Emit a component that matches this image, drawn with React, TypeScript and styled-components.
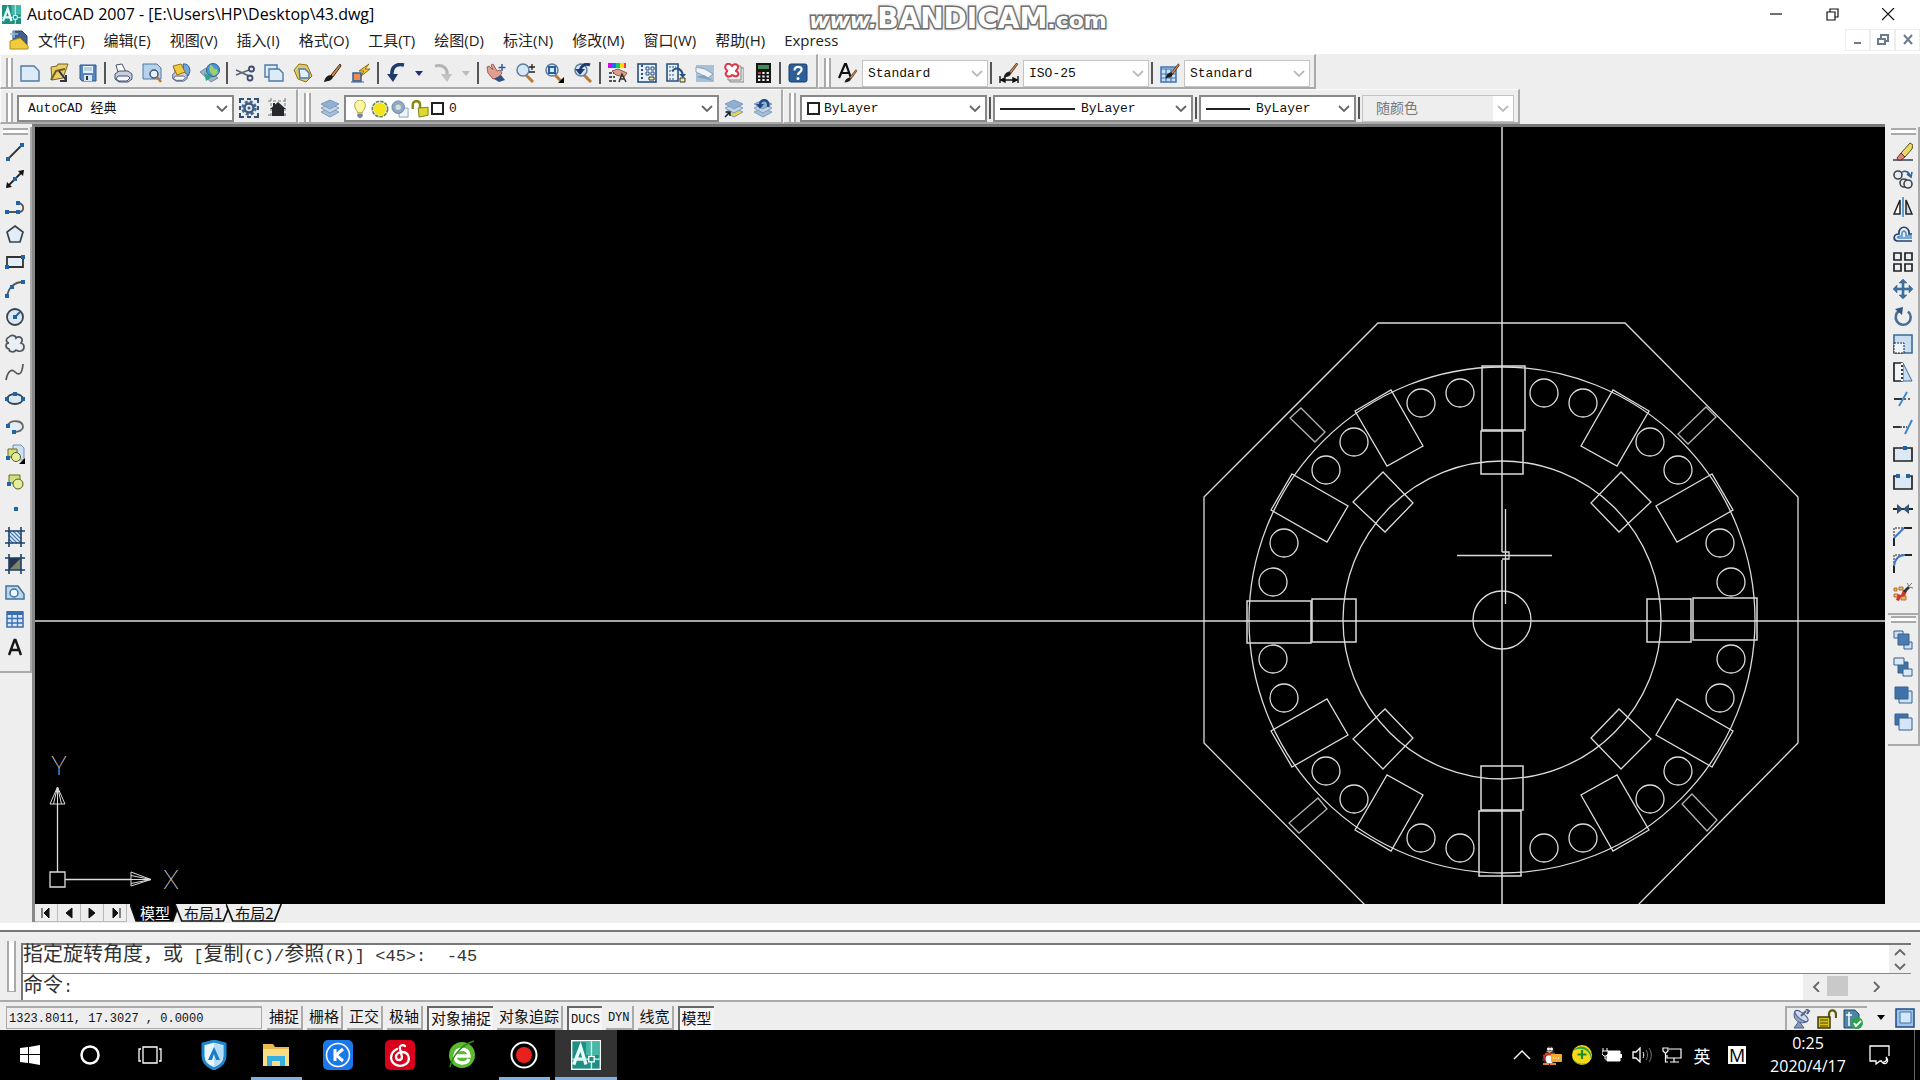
import React from "react";
import styled, { createGlobalStyle, css } from "styled-components";

const UI = `"Open Sans", "Noto Sans CJK SC", sans-serif`;
const MONO = `"Liberation Mono", "Noto Sans CJK SC", monospace`;

const GlobalStyle = createGlobalStyle`
  * { box-sizing: border-box; }
  body { margin: 0; background: #eee; font-family: ${UI}; color: #111; }
  button, select, input { font: inherit; color: inherit; margin: 0; padding: 0; border: 0; background: none; border-radius: 0; }
  button { cursor: default; }
  svg { display: block; }
`;

/* ---------- icons ---------- */

const B = "#2d5f9a";
const sheet = <path d="M1 3h13l5 5v10H1z" fill="#dcebf8" stroke="#4d79a5" strokeWidth="1.4" />;
const printer = (
  <g stroke="#44506e" strokeWidth="1">
    <path d="M5 9L3 2l6-1 4 8z" fill="#fff" />
    <path d="M2 11l4-3h9l4 3v5l-4 3H6l-4-3z" fill="#c8cede" />
    <path d="M5 13h10l2 2-3 3H6l-3-2z" fill="#f4f6fb" />
  </g>
);
const lens = (
  <g>
    <path d="M11 12l7 7" stroke="#b97a35" strokeWidth="3" />
    <circle cx="8" cy="7" r="6" fill="#d6e7f7" stroke="#5e7ea0" strokeWidth="1.5" />
  </g>
);
const brush = (
  <g>
    <path d="M9 12L18 1l1 2-8 11z" fill="#c98b55" stroke="#4a2a16" strokeWidth="1" />
    <path d="M2 19c1-4 3-7 7-7l2 2c-1 4-5 4-9 5z" fill="#1d1d1d" />
  </g>
);
const stack = (c: string) => (
  <g stroke="#7f9cbd" strokeWidth="1">
    <path d="M1 14l9-4 9 4-9 5z" fill={c} />
    <path d="M1 10l9-4 9 4-9 5z" fill="#c2d4e8" />
    <path d="M1 6l9-4 9 4-9 5z" fill="#8fb0d3" />
  </g>
);
const dot = (x: number, y: number) => <rect x={x - 2} y={y - 2} width="4" height="4" fill="#1f65a5" />;
const frame = <path d="M4 0v20M16 0v20M0 4h20M0 16h20" stroke="#1f3f66" strokeWidth="1.6" />;

const ICONS: Record<string, React.ReactNode> = {
  new: sheet,
  open: (
    <g stroke="#776024">
      <path d="M2 4l6-1 1-2h10l-5 14-11 2z" fill="#e9cf6a" />
      <path d="M2 17l5-9 9-2" fill="none" strokeWidth="2" />
      <path d="M10 8l7 9m0-5v6h-6" stroke="#334" strokeWidth="2" fill="none" />
    </g>
  ),
  save: (
    <g>
      <path d="M2 2h16v16H4l-2-2z" fill="#5487c2" stroke="#2f5a8e" />
      <rect x="5" y="3" width="10" height="7" fill="#e6f0fa" />
      <path d="M6 5h8M6 7h8" stroke="#8fb0d3" />
      <rect x="6" y="12" width="8" height="6" fill="#dfe6ee" />
      <rect x="8" y="13" width="2" height="4" fill="#234" />
    </g>
  ),
  print: printer,
  preview: (
    <g>
      <path d="M1 1h14l4 4v11H1z" fill="#b7d2ec" stroke="#4d79a5" />
      <circle cx="12" cy="11" r="4" fill="#e5f2fd" stroke="#456" strokeWidth="1.5" />
      <path d="M15 14l4 5" stroke="#b97a35" strokeWidth="2.5" />
    </g>
  ),
  publish: (
    <g>
      <path d="M12 1c6-1 9 6 5 12l-4-2z" fill="#6aa8df" stroke="#2d5f9a" />
      <g transform="translate(0 2) scale(.85)">{printer}</g>
      <path d="M2 3l8-2 4 8-8 3z" fill="#f1ca3e" stroke="#9a7413" />
    </g>
  ),
  web: (
    <g>
      <path d="M0 9l6-4 12 10-7 4z" fill="#9fb0c4" stroke="#7d8ea3" />
      <circle cx="13" cy="7" r="6.5" fill="#4b93d8" stroke="#2a5f92" />
      <path d="M10 2c4 0 3 5 7 4l1 4-4 3c-3-3-6-4-4-11z" fill="#9bd06a" />
      <path d="M4 10l8 4-6 4z" fill="#28a884" />
    </g>
  ),
  cut: (
    <g fill="none" stroke="#3d4c72" strokeWidth="1.8">
      <path d="M1 7l13 6M1 12l13-5" stroke="#5c6878" />
      <circle cx="16.5" cy="6" r="2.5" />
      <circle cx="15" cy="15" r="2.5" />
    </g>
  ),
  copy: (
    <g fill="#dcebf8" stroke="#4d79a5" strokeWidth="1.4">
      <path d="M1 2h12v12H1z" />
      <path d="M5 6h10l4 4v8H5z" />
    </g>
  ),
  paste: (
    <g>
      <path d="M1 7l5-6 8 1 5 11-6 6-8-3z" fill="#e2c862" stroke="#8a7324" />
      <path d="M6 6h6l4 4v5H7z" fill="#e3effa" stroke="#4d79a5" strokeWidth="1.4" />
    </g>
  ),
  brush,
  block: (
    <g>
      <path d="M18 1L8 8h5l-4 6 10-8h-5z" fill="#f3c531" stroke="#916c10" />
      <rect x="2" y="10" width="8" height="8" fill="#f08a4e" stroke={B} strokeWidth="1.5" />
      <path d="M0 19h13" stroke={B} />
    </g>
  ),
  undo: (
    <g>
      <path d="M18 2C9 0 5 5 6 13" fill="none" stroke="#1f3a6c" strokeWidth="3.5" />
      <path d="M1 11h11l-5 8z" fill="#1f3a6c" />
    </g>
  ),
  redo: (
    <g>
      <path d="M2 3c9-2 13 3 12 10" fill="none" stroke="#b5b5b5" strokeWidth="3" />
      <path d="M8 11h11l-5 8z" fill="#c2c2c2" />
    </g>
  ),
  pan: (
    <g>
      <path d="M1 4l2-1 4 4-2-5 2-1 4 7 3-1 2 3-4 5-5 1-5-6z" fill="#dfa091" stroke="#a15d52" />
      <path d="M8 16l7-4 4 5-6 2z" fill="#2f5380" />
      <path d="M16 1v7M12.500 4.500h7" stroke={B} strokeWidth="1.5" />
    </g>
  ),
  zoom: (
    <g>
      {lens}
      <path d="M17 1v6M14 4h6M14 9h6" stroke="#222" strokeWidth="1.3" />
    </g>
  ),
  zoomWindow: (
    <g>
      {lens}
      <rect x="5" y="4" width="6" height="6" fill="none" stroke={B} strokeWidth="2" />
      <path d="M20 14v6h-6z" />
    </g>
  ),
  zoomPrev: (
    <g>
      {lens}
      <path d="M17 2C12 0 8 3 7 7" fill="none" stroke="#1f3a6c" strokeWidth="3" />
      <path d="M2 6h10l-5 6z" fill="#1f3a6c" />
    </g>
  ),
  props: (
    <g>
      <path d="M0 0h4v5H0z" fill="#d0e" />
      <path d="M4 0h4v5H4z" fill="#26f" />
      <path d="M8 0h4v5H8z" fill="#1c6" />
      <path d="M12 0h4v5h-4z" fill="#fd0" />
      <path d="M16 0h2v5h-2z" fill="#f33" />
      <path d="M4 8l6-2 9 4-3 4-8-2z" fill="#dba08f" stroke="#93594d" />
      <path d="M1 10h5M1 14h6M1 18h8" stroke="#555" strokeDasharray="3 1" strokeWidth="2" />
      <path d="M11 19l3-8 4 8m-6-3h5" fill="none" stroke="#333" strokeWidth="1.5" />
    </g>
  ),
  design: (
    <g>
      <rect x="1" y="1" width="18" height="18" fill="#e8f1fa" stroke="#274f80" strokeWidth="1.6" />
      <path d="M5 2v16" stroke="#274f80" strokeDasharray="2 2" strokeWidth="2" />
      <path d="M9 4h3v3H9zM14 4h3v3h-3zM9 9h3v3H9zM14 9h3v3h-3z" fill="none" stroke="#274f80" />
      <path d="M12 14h5v3h-5z" fill="#f4e9a0" stroke="#333" />
    </g>
  ),
  palettes: (
    <g>
      <path d="M1 1h11v17H1z" fill="#e8f1fa" stroke="#274f80" strokeWidth="1.6" />
      <path d="M3 4h7M3 8h5M3 12h5M3 16h5" stroke="#274f80" strokeDasharray="2 1" />
      <path d="M6 8c5-5 10-2 11 5" fill="none" stroke="#274f80" strokeWidth="2" />
      <path d="M13 11h7l-3 4z" fill="#274f80" />
      <path d="M14 15h5v4h-5z" fill="#f4e9a0" stroke="#333" />
    </g>
  ),
  sheetset: (
    <g>
      <path d="M1 2h18v17H1z" fill="#a9c1d6" />
      <path d="M1 4l9 2 8 5-5 4-12-6z" fill="#eef3f7" stroke="#8ba2b5" />
      <path d="M1 14l8-2 10 6" fill="#7fa3bf" />
    </g>
  ),
  markup: (
    <g>
      <path d="M6 5h14v14H6z" fill="#ddd" stroke="#888" />
      <path d="M4 3h13v14H4z" fill="#eee" stroke="#888" />
      <path d="M3 1c3-1 4 1 5 2 2-3 6-2 6 1s-2 3-2 4c3 1 3 4 1 5s-4-1-5-1c-1 2-5 2-6 0s1-4 2-4C1 7 0 3 3 1z" fill="#fff" stroke="#dc3548" strokeWidth="2" />
    </g>
  ),
  calc: (
    <g>
      <rect x="3" y="0" width="15" height="20" fill="#161616" />
      <path d="M5 2h11v4H5z" fill="#408a55" />
      <path d="M5 10h11M5 13.500h11M5 17h11" stroke="#f2f2f2" strokeWidth="2" strokeDasharray="2.3 2" />
      <path d="M5 10h2.300" stroke="#d33" strokeWidth="2" />
    </g>
  ),
  help: (
    <g>
      <rect x="1" y="1" width="18" height="18" rx="2" fill="#2c5f99" stroke="#173d6b" />
      <path d="M6.500 7.500c0-5 8-4.500 7-.5-.5 2-3.500 2.500-3.500 5" fill="none" stroke="#fff" strokeWidth="2.2" />
      <circle cx="10" cy="15.5" r="1.5" fill="#fff" />
    </g>
  ),
  textStyle: (
    <g>
      <path d="M1 15L7 1h1l5 14M4 10h7" fill="none" stroke="#111" strokeWidth="2.2" />
      <g transform="translate(5 6) scale(.72)">{brush}</g>
    </g>
  ),
  dimStyle: (
    <g>
      <g transform="translate(3 -1) scale(.82)">{brush}</g>
      <path d="M1 13v7M19 13v7M1 17h18M2 17l4-2v4zM18 17l-4-2v4z" stroke="#111" strokeWidth="1.4" />
    </g>
  ),
  tableStyle: (
    <g>
      <path d="M1 4h15v15H1z" fill="#c9dff5" stroke="#3e73b0" strokeWidth="1.5" />
      <path d="M1 6h15M1 11h15M1 15h15M6 6v13M11 6v13" stroke="#3e73b0" strokeWidth="1.2" />
      <g transform="translate(4 0) scale(.8)">{brush}</g>
    </g>
  ),
  gear: (
    <g>
      <path d="M1 5V1h4M8 1h4M15 1h4v4M19 8v4M19 15v4h-4M12 19H8M5 19H1v-4M1 12V8" fill="none" stroke="#2f5279" strokeWidth="2" />
      <circle cx="10" cy="10" r="6.5" fill="none" stroke="#4b6c92" strokeWidth="2.5" strokeDasharray="3 2.1" />
      <circle cx="10" cy="10" r="4.5" fill="#dfe9f3" stroke="#3c5a7d" strokeWidth="2.4" />
      <circle cx="10" cy="10" r="1.5" fill="#3c5a7d" />
    </g>
  ),
  home: (
    <g>
      <path d="M3 0v20M17 0v20M0 3h20M0 17h20" stroke="#777" strokeDasharray="3 2" />
      <path d="M10 4l8 7h-2v7H4v-7H2z" fill="#24282d" />
      <path d="M5 5h2v4H5z" fill="#24282d" />
    </g>
  ),
  layers: stack("#a8bdd6"),
  layerCurrent: (
    <g>
      {stack("#e3d44b")}
      <path d="M1 19l5-5M2 14h4v4" stroke="#123" strokeWidth="1.5" fill="none" />
    </g>
  ),
  layerPrev: (
    <g>
      {stack("#a8bdd6")}
      <path d="M15 9c2-8-7-9-8-3" fill="none" stroke="#1f4b86" strokeWidth="2.5" />
      <path d="M3 6h8l-4 5z" fill="#1f4b86" />
    </g>
  ),
  bulb: (
    <g>
      <path d="M7 14c0-3-3-4-3-8a6 6 0 0 1 12 0c0 4-3 5-3 8z" fill="#fdf6a0" stroke="#b29c34" />
      <path d="M7 15h6v3l-2 2H9l-2-2z" fill="#77839b" />
    </g>
  ),
  sun: (
    <g>
      <circle cx="10" cy="10" r="8.5" fill="none" stroke="#6a8a55" strokeWidth="2" strokeDasharray="4 1" />
      <circle cx="10" cy="10" r="7" fill="#f6e418" />
    </g>
  ),
  freeze: (
    <g>
      <path d="M9 9h10v10H9z" fill="#eef4fb" stroke="#7f9cbd" />
      <circle cx="8" cy="8" r="7" fill="#8fa9bf" stroke="#6a89a5" />
      <circle cx="8" cy="8" r="3" fill="#d5dfe7" />
    </g>
  ),
  unlock: (
    <g>
      <path d="M2 10V5c0-5 8-5 8 0v5" fill="none" stroke="#8c8918" strokeWidth="2.8" />
      <path d="M8 9l11-1v9l-10 2z" fill="#dcd92e" stroke="#77750f" />
    </g>
  ),
  line: (
    <g>
      <path d="M3 17L17 3" stroke="#333" strokeWidth="1.8" />
      {dot(3, 17)}
      {dot(17, 3)}
    </g>
  ),
  xline: (
    <g>
      <path d="M2 18L18 2" stroke="#222" strokeWidth="1.8" />
      <path d="M13 2l6-1-1 6zM1 19l6-1-5-5z" fill="#111" />
      {dot(10, 10)}
    </g>
  ),
  pline: (
    <g>
      <path d="M2 15h11c7 1 7-9 0-9" fill="none" stroke="#555" strokeWidth="1.8" />
      {dot(2, 15)}
      {dot(13, 15)}
      {dot(13, 6)}
    </g>
  ),
  polygon: <path d="M10 2l8 6-3 10H5L2 8z" fill="#e2edf7" stroke="#39424c" strokeWidth="1.7" />,
  rect: (
    <g>
      <path d="M2 5h16v10H2z" fill="#e2edf7" stroke="#333" strokeWidth="1.8" />
      {dot(2, 15)}
      {dot(18, 5)}
    </g>
  ),
  arc: (
    <g>
      <path d="M2 18C3 9 9 3 18 3" fill="none" stroke="#555" strokeWidth="1.8" />
      {dot(2, 17)}
      {dot(7, 8)}
      {dot(18, 3)}
    </g>
  ),
  circle: (
    <g>
      <circle cx="10" cy="10" r="8" fill="#dbe9f6" stroke="#39424c" strokeWidth="1.8" />
      <path d="M10 10l5-5" stroke={B} strokeWidth="2" />
      {dot(10, 10)}
    </g>
  ),
  cloud: <path d="M4 3c3-3 7-1 7 1 4-3 8 1 5 5 4 1 4 7 0 8-3 1-4-1-5-1-2 3-7 2-7-1-4-1-4-6 0-6C0 8 1 4 4 3z" fill="#e8f0f8" stroke="#555" strokeWidth="1.7" />,
  spline: <path d="M1 18C3 8 7 7 10 10s7 4 8-8" fill="none" stroke="#555" strokeWidth="1.7" />,
  ellipse: (
    <g>
      <ellipse cx="10" cy="10" rx="8" ry="5" fill="#dbe9f6" stroke="#39424c" strokeWidth="1.8" />
      {dot(2, 10)}
      {dot(18, 10)}
      {dot(10, 5)}
    </g>
  ),
  ellipseArc: (
    <g>
      <path d="M2 9c4-7 16-6 16 1 0 3-4 5-9 5" fill="#e2edf7" stroke="#666" strokeWidth="1.8" />
      {dot(3, 9)}
      {dot(9, 15)}
    </g>
  ),
  insert: (
    <g>
      <path d="M8 1h8l3 3v12H8z" fill="#cfe0f2" stroke="#6c8fb5" />
      <path d="M3 5h9v8H3z" fill="#d4df79" stroke="#666d20" />
      <circle cx="11" cy="13" r="4.5" fill="#e5eda0" stroke="#555c1c" />
      {dot(3, 14)}
      <path d="M20 14v6h-6z" />
    </g>
  ),
  makeBlock: (
    <g>
      <path d="M4 3h11v8H4z" fill="#d4df79" stroke="#666d20" />
      <circle cx="13" cy="12" r="5" fill="#e5eda0" stroke="#555c1c" />
      {dot(4, 12)}
    </g>
  ),
  point: dot(11, 10),
  hatch: (
    <g>
      <path d="M4 4h12v12H4z" fill="#e7eff7" />
      <path d="M4 12l4 4M4 8l8 8M4 4l12 12M8 4l8 8M12 4l4 4" stroke="#3f77b0" strokeWidth="1.2" />
      {frame}
    </g>
  ),
  gradient: (
    <g>
      <path d="M4 4h12v12H4z" fill="#7b8668" />
      <path d="M4 4h12L4 16z" fill="#2a3050" />
      {frame}
    </g>
  ),
  region: (
    <g>
      <path d="M1 4h12l6 8v5H1z" fill="#bcd6ee" stroke="#40739f" strokeWidth="1.5" />
      <circle cx="9" cy="11" r="4" fill="#eef5fb" stroke="#40739f" strokeWidth="1.5" />
    </g>
  ),
  table: (
    <g>
      <path d="M2 3h16v15H2z" fill="#d9e9f9" stroke="#3b6db0" strokeWidth="1.5" />
      <path d="M2 4h16" stroke="#3b6db0" strokeWidth="4" />
      <path d="M2 9.500h16M2 14h16M7 5v13M12.500 5v13" stroke="#3b6db0" strokeWidth="1.3" />
    </g>
  ),
  text: <path d="M4 18L9.500 3h1L16 18M6 13h8" fill="none" stroke="#161616" strokeWidth="2.4" />,
  erase: (
    <g>
      <path d="M0 18h20" stroke="#234" strokeWidth="1.4" />
      <path d="M8 11L17 1l3 2-1 4-7 8z" fill="#ead868" stroke="#56511f" />
      <path d="M4 16l4-5 4 4-4 3H5z" fill="#d9857a" stroke="#6d3029" />
    </g>
  ),
  copyObj: (
    <g fill="#e4edf6" stroke="#444" strokeWidth="1.6">
      <circle cx="5" cy="6" r="4" />
      <circle cx="11" cy="14" r="4" />
      <circle cx="15" cy="15" r="4" />
      <path d="M9 3c4-2 7 0 8 4M14 5l4 3 1-5" fill="none" stroke={B} />
    </g>
  ),
  mirror: (
    <g>
      <path d="M7 3v14H1z" fill="#fff" stroke="#222" strokeWidth="1.5" />
      <path d="M13 3v14h6z" fill="#cfe0f2" stroke="#222" strokeWidth="1.5" />
      <path d="M10 0v20" stroke="#3c86cf" strokeWidth="1.6" />
    </g>
  ),
  offset: (
    <g fill="none" strokeWidth="1.7">
      <path d="M19 17H4c-4-1-4-7 2-7-1-9 11-9 10 0h3" stroke="#24436b" />
      <path d="M19 14H5c-1-1 0-2 4-2-1-7 5-6 4 0h6" stroke="#4e93d9" />
    </g>
  ),
  array: (
    <g fill="#e9eff6" stroke="#222" strokeWidth="1.7">
      <path d="M1 1h7v7H1zM12 1h7v7h-7zM1 12h7v7H1zM12 12h7v7h-7z" />
    </g>
  ),
  move: <path d="M10 0l4 4h-3v5h5V6l4 4-4 4v-3h-5v5h3l-4 4-4-4h3v-5H4v3l-4-4 4-4v3h5V4H6z" fill="#3d6f9f" stroke="#3d6f9f" strokeWidth=".6" />,
  rotate: (
    <g>
      <path d="M7 3.500a7.500 7.500 0 1 0 8 1" fill="none" stroke="#4a6d94" strokeWidth="2.6" />
      <path d="M2 2l8-2-1 8z" fill="#33587f" />
    </g>
  ),
  scale: (
    <g>
      <path d="M1 1h18v18H1z" fill="#c9def2" stroke="#3e6a98" strokeWidth="1.6" />
      <path d="M1 9h10v10H1z" fill="#eef5fb" stroke="#222" strokeDasharray="2 1" />
    </g>
  ),
  stretch: (
    <g>
      <path d="M10 1l9 18h-9z" fill="#c9def2" stroke="#3e6a98" />
      <path d="M1 1h8v18H1z" fill="#f1f5f9" stroke="#222" strokeWidth="1.7" />
      <path d="M9 1v18" stroke="#fff" strokeDasharray="2 2" strokeWidth="2" />
    </g>
  ),
  trim: (
    <g>
      <path d="M1 10h8" stroke="#333" strokeWidth="2" />
      <path d="M11 10h8" stroke="#333" strokeDasharray="2 2" strokeWidth="1.5" />
      <path d="M6 17l8-14" stroke="#3c86cf" strokeWidth="1.8" />
    </g>
  ),
  extend: (
    <g>
      <path d="M0 10h7" stroke="#333" strokeWidth="2" />
      <path d="M7 10h7" stroke="#333" strokeDasharray="2 1" strokeWidth="1.5" />
      <path d="M12 17l7-14" stroke="#3c86cf" strokeWidth="2" />
    </g>
  ),
  breakAt: (
    <g>
      <path d="M1 4h18v13H1z" fill="#dbe8f5" stroke="#222" strokeWidth="1.7" />
      {dot(12, 4)}
    </g>
  ),
  break: (
    <g>
      <path d="M5 4H1v13h18V4h-4" fill="#dbe8f5" stroke="#222" strokeWidth="1.7" />
      {dot(5, 4)}
      {dot(15, 4)}
    </g>
  ),
  join: (
    <g>
      <path d="M0 10h20" stroke="#222" strokeWidth="2" />
      <path d="M4 5l6 5-6 5zM16 5l-6 5 6 5z" fill="#34567c" />
    </g>
  ),
  chamfer: (
    <g fill="none">
      <path d="M1 19v-8M11 1h8" stroke="#222" strokeWidth="2" />
      <path d="M1 9V1h9" stroke="#222" strokeDasharray="2 1" />
      <path d="M1 11L11 1" stroke="#3c78c8" strokeWidth="2" />
    </g>
  ),
  fillet: (
    <g fill="none">
      <path d="M1 19v-8M11 1h8" stroke="#222" strokeWidth="2" />
      <path d="M1 9V1h9" stroke="#222" strokeDasharray="2 1" />
      <path d="M1 12C2 5 5 1 12 1" stroke="#3c78c8" strokeWidth="2" />
    </g>
  ),
  explode: (
    <g>
      <path d="M1 6h3v3H1zM6 5h4v3H6zM1 12h4v3H1zM8 14h5v4H8z" fill="#f5b35c" stroke="#9b5a1c" strokeWidth=".8" />
      <path d="M3 18l2-6 3 1 2-5 4 1-2 5-4 1-2 4z" fill="#d3372c" />
      <path d="M10 9l5-5 2 2-5 5z" fill="#333" />
      <path d="M14 1l2 3M19 1l-3 3M20 6l-4-1" stroke="#777" />
    </g>
  ),
  front: (
    <g stroke="#37618d">
      <path d="M1 1h9v7H1zM11 12h8v7h-8z" fill="#cfe2f4" />
      <path d="M5 4h11v11H5z" fill="#4a7db2" />
    </g>
  ),
  back: (
    <g stroke="#37618d">
      <path d="M5 5h10v11H5z" fill="#3f72a8" />
      <path d="M1 1h10v7H1zM10 12h9v7h-9z" fill="#dbe9f7" />
    </g>
  ),
  above: (
    <g stroke="#37618d">
      <path d="M6 6h13v12H6z" fill="#cfe2f4" />
      <path d="M2 2h13v12H2z" fill="#3f72a8" />
    </g>
  ),
  under: (
    <g stroke="#37618d">
      <path d="M2 2h13v11H2z" fill="#3f72a8" />
      <path d="M6 6h13v12H6z" fill="#d3e5f6" />
    </g>
  ),
  dish: (
    <g stroke="#4d5f8c">
      <path d="M3 19l5-7 5 7z" fill="#8996b8" />
      <path d="M4 2c-4 9 6 15 13 10z" fill="#93a4c8" />
      <ellipse cx="10.5" cy="7" rx="8" ry="3" transform="rotate(38 10.5 7)" fill="#d2dcee" />
      <path d="M10 7l5-5M15 0l3 2-2 3" strokeWidth="2" fill="none" />
    </g>
  ),
  tray: (
    <g>
      <path d="M12 9V5c0-5 7-5 7 1v3" fill="none" stroke="#5d5a10" strokeWidth="2.2" />
      <path d="M1 8h12v11H1z" fill="#d6bf1b" stroke="#3f3b08" strokeWidth="1.5" />
      <path d="M3 11h8M3 14h8M3 17h8" stroke="#4a450a" />
    </g>
  ),
  xref: (
    <g>
      <path d="M1 1h11l4 4v14H1z" fill="#4f86a6" stroke="#204a60" />
      <path d="M6 3v14M3 6h6" stroke="#fff" strokeWidth="1.5" />
      <circle cx="14" cy="14" r="6" fill="#2ba24a" />
      <path d="M11 14l2 3 5-5" fill="none" stroke="#fff" strokeWidth="2" />
    </g>
  ),
  clean: (
    <g>
      <path d="M1 1h18v18H1z" fill="#9fc3e6" stroke="#1f4b86" strokeWidth="1.5" />
      <path d="M5 4h11v11H5z" fill="#d5e7f8" stroke="#3e73b0" />
    </g>
  ),
  autocad: (
    <g>
      <path d="M0 0h20v20H0z" fill="#1f8f83" />
      <path d="M10 0h10v10H10z" fill="#45b8a8" />
      <path d="M1 17L6 4l4 13M3 13h6" fill="none" stroke="#e9fffb" strokeWidth="2.4" />
      <path d="M14 0v20M0 13h20" stroke="#d9f5f0" strokeWidth="1" />
      <path d="M12 11h4v4h-4z" fill="#1f8f83" stroke="#fff" />
    </g>
  ),
  dwg: (
    <g>
      <path d="M4 1h9l5 5v11H4z" fill="#41618c" stroke="#28456c" />
      <path d="M1 11l10-3 8 8v3H1z" fill="#f0cb3c" stroke="#b08d1a" />
      <path d="M5 0v8M1 4h8" stroke="#8fb8e0" strokeWidth="1.5" />
    </g>
  ),
};

const Icon = ({ name, size = 20 }: { name: string; size?: number }) => (
  <svg width={size} height={size} viewBox="0 0 20 20" aria-hidden="true">
    {ICONS[name]}
  </svg>
);

/* ---------- window frame ---------- */

const Page = styled.div`
  display: flex;
  flex-direction: column;
  height: 100vh;
  overflow: hidden;
`;

const TitleBar = styled.header`
  position: relative;
  display: flex;
  align-items: center;
  height: 28px;
  padding: 0 4px 0 2px;
  background: #fff;
`;

const Title = styled.h1`
  flex: 1;
  margin: 0 0 0 6px;
  font-size: 16px;
  line-height: 28px;
  font-weight: 400;
  color: #000;
`;

const WindowButton = styled.button`
  display: grid;
  place-items: center;
  width: 56px;
  height: 28px;
`;

const Watermark = styled.div`
  position: absolute;
  top: 3px;
  left: 0;
  right: 0;
  padding-right: 4px;
  text-align: center;
  font: 700 28px/32px "DejaVu Sans", sans-serif;
  color: #fff;
  -webkit-text-stroke: 3px #666;
  paint-order: stroke fill;
  text-shadow: 0 0 4px #888;
  pointer-events: none;
  z-index: 2;
`;

const WatermarkSmall = styled.span`
  font-size: 22px;
  font-style: ${(p: { $slant?: boolean }) => (p.$slant ? "italic" : "normal")};
`;

const MenuBar = styled.nav`
  display: flex;
  align-items: center;
  height: 26px;
  padding: 0 0 2px 9px;
  background: #fff;
`;

const Menus = styled.div`
  display: flex;
  flex: 1;
  gap: 19px;
  margin-left: 9px;
`;

const MenuItem = styled.button`
  font-size: 15px;
  line-height: 24px;
  white-space: nowrap;
  color: #222;
`;

const ChildButton = styled.button`
  display: grid;
  place-items: center;
  width: 25px;
  height: 22px;
  border: 1px solid #eee;
`;

/* ---------- toolbars ---------- */

const Grip = styled.div<{ $flat?: boolean }>`
  flex: none;
  border: 0 solid #aaa;
  ${(p) =>
    p.$flat
      ? css`
          width: 25px;
          height: 7px;
          margin: 1px 2px 3px;
          border-width: 2px 0;
          background: #fff;
        `
      : css`
          width: 7px;
          height: 29px;
          margin-right: 4px;
          border-width: 0 2px;
          background: #fff;
        `}
`;

const ToolRow = styled.div<{ $tight?: boolean }>`
  display: flex;
  height: 35px;

  ${Grip} {
    margin-right: ${(p) => (p.$tight ? 2 : 4)}px;
  }
`;

const ToolPanel = styled.div`
  display: flex;
  align-items: flex-end;
  padding: 0 4px 0 5px;
  border-top: 1px solid #fafafa;
  border-left: 1px solid #fafafa;
  border-right: 2px solid #aaa;
  border-bottom: 2px solid #aaa;
`;

const ToolButton = styled.button`
  display: grid;
  place-items: center;
  flex: none;
  width: 29px;
  height: 28px;
`;

const DropButton = styled(ToolButton)`
  width: 18px;
`;

const Separator = styled.span`
  flex: none;
  width: 2px;
  height: 22px;
  margin: 0 2px 3px;
  background: #555;
`;

const Combo = styled.div<{ $width: number; $soft?: boolean; $off?: boolean }>`
  display: flex;
  align-items: center;
  gap: 2px;
  width: ${(p) => p.$width}px;
  height: 27px;
  padding: 0 4px 0 5px;
  background: ${(p) => (p.$off ? "linear-gradient(to left, #fff 20px, #eee 20px)" : "#fff")};
  border: ${(p) => (p.$soft ? "1px solid #c4c4c4" : "2px solid #888")};
  color: ${(p) => (p.$off ? "#777" : "#111")};
`;

const Select = styled.select<{ $indent?: number; $han?: boolean }>`
  flex: 1;
  min-width: 0;
  height: 22px;
  padding-left: ${(p) => p.$indent ?? 0}px;
  appearance: none;
  opacity: 1;
  font-family: ${MONO};
  font-size: ${(p) => (p.$han ? 14 : 13)}px;
`;

const Swatch = styled.span`
  width: 13px;
  height: 13px;
  border: 2px solid #222;
`;

const Rule = styled.span<{ $width: number }>`
  width: ${(p) => p.$width}px;
  height: 2px;
  margin-right: 4px;
  background: #222;
`;

const Chevron = ({ color = "#666", d = "M1 3l5 5 5-5" }: { color?: string; d?: string }) => (
  <svg width="12" height="11" viewBox="0 0 12 11" aria-hidden="true">
    <path d={d} fill="none" stroke={color} strokeWidth="1.8" />
  </svg>
);

const Caret = ({ color }: { color: string }) => (
  <svg width="8" height="5" viewBox="0 0 8 5" aria-hidden="true">
    <path d="M0 0h8L4 5z" fill={color} />
  </svg>
);

type ComboProps = {
  label: string;
  value: string;
  width: number;
  soft?: boolean;
  off?: boolean;
  indent?: number;
  han?: boolean;
  children?: React.ReactNode;
};

const ComboBox = ({ label, value, width, soft, off, indent, han, children }: ComboProps) => (
  <Combo $width={width} $soft={soft} $off={off}>
    {children}
    <Select aria-label={label} $indent={indent} $han={han} disabled={off}>
      <option>{value}</option>
    </Select>
    <Chevron color={soft ? "#bbb" : "#666"} />
  </Combo>
);

const Tools = ({ names }: { names: string[] }) => (
  <>
    {names.map((n) => (
      <ToolButton key={n} aria-label={n}>
        <Icon name={n} />
      </ToolButton>
    ))}
  </>
);

/* ---------- work area ---------- */

const Work = styled.main`
  display: flex;
  flex: 1;
  min-height: 0;
`;

const Side = styled.aside<{ $right?: boolean }>`
  flex: none;
  width: ${(p) => (p.$right ? 35 : 32)}px;
  padding: ${(p) => (p.$right ? "3px 0 0 3px" : "3px 0 0")};
`;

const SidePanel = styled.div<{ $tail?: number }>`
  display: flex;
  flex-direction: column;
  align-items: center;
  padding-bottom: ${(p) => p.$tail ?? 8}px;
  border-right: 2px solid #aaa;
  border-bottom: 2px solid #aaa;
`;

const SideTools = styled.div`
  display: flex;
  flex-direction: column;

  ${ToolButton} {
    height: 27px;
  }
  ${ToolButton}:nth-child(even) {
    height: 28px;
  }
`;

const Viewport = styled.section`
  display: flex;
  flex-direction: column;
  flex: 1;
  min-width: 0;
  border-left: 3px solid #888;
  border-top: 3px solid #777;
`;

const Canvas = styled.div`
  flex: 1;
  min-height: 0;
  background: #000;

  svg {
    width: 100%;
    height: 100%;
  }
`;

const AxisLabel = styled.text`
  font: 100 26px Roboto, sans-serif;
  fill: #eee;
  text-anchor: middle;
`;

const TabBar = styled.div`
  display: flex;
  height: 18px;
`;

const TabNav = styled.button`
  display: grid;
  place-items: center;
  width: 23px;
  border-right: 1px solid #bbb;
  border-bottom: 1px solid #bbb;
`;

const Tabs = styled.div`
  display: flex;
  margin-left: 3px;
`;

const Tab = styled.button<{ $on?: boolean }>`
  display: grid;
  height: 18px;
  margin-right: -5px;
  color: ${(p) => (p.$on ? "#fff" : "#111")};
  font: 15px/17px "Noto Sans CJK SC", sans-serif;

  > * {
    grid-area: 1 / 1;
  }
  svg {
    width: 100%;
    height: 18px;
  }
  span {
    padding: 0 9px;
    z-index: 1;
  }
`;

/* ---------- command line ---------- */

const Command = styled.section`
  display: flex;
  flex: none;
  height: 79px;
  margin-top: 1px;
  padding: 10px 9px 0 7px;
  border-bottom: 2px solid #aaa;
  background: linear-gradient(#fff 7px, #777 7px, #777 9px, #eee 9px);
`;

const CommandGrip = styled.div`
  width: 9px;
  height: 51px;
  margin: 8px 5px 0 0;
  border: solid #aaa;
  border-width: 0 2px 1px;
  background: #fff;
`;

const CommandBox = styled.div`
  flex: 1;
  margin-top: 10px;
  border-left: 2px solid #777;
  border-top: 2px solid #777;
  font: 17px/26px ${MONO};
  color: #333;
`;

const CommandRow = styled.div<{ $entry?: boolean }>`
  display: flex;
  height: ${(p) => (p.$entry ? 26 : 29)}px;
  background: #fff;
  white-space: pre;
  ${(p) => !p.$entry && "border-bottom: 1px solid #888; line-height: 21px;"}
`;

const Message = styled.div`
  flex: 1;
`;

const Han = styled.span`
  font-size: 20px;
`;

const Prompt = styled.label`
  padding-right: 6px;
`;

const Entry = styled.input`
  flex: 1;
  min-width: 0;
  outline: none;
`;

const VScroll = styled.div`
  display: flex;
  flex-direction: column;
  justify-content: space-around;
  align-items: center;
  width: 22px;
  background: #eee;

  button {
    display: block;
  }
`;

const HScroll = styled.div`
  display: flex;
  align-items: center;
  gap: 4px;
  width: 108px;
  padding: 0 29px 2px 8px;
  background: #eee;
`;

const Thumb = styled.span`
  width: 21px;
  height: 20px;
  margin-right: auto;
  background: #c9c9c9;
`;

/* ---------- status bar ---------- */

const Status = styled.footer`
  display: flex;
  flex: none;
  align-items: center;
  height: 28px;
  padding: 3px 5px 0 6px;
`;

const Coordinates = styled.output`
  width: 256px;
  height: 23px;
  margin-right: 5px;
  border: 1px solid #aaa;
  border-top-width: 2px;
  font: 12px/22px ${MONO};
  padding-left: 2px;
  white-space: pre;
`;

const Toggle = styled.button<{ $down?: boolean; $latin?: boolean }>`
  height: 24px;
  margin-right: 4px;
  padding: 3px 2px 0;
  border: solid #aaa;
  border-width: 0 2px 2px 0;
  font: ${(p) => (p.$latin ? "12px/19px" : "15px/19px")} ${MONO};
  ${(p) =>
    p.$down &&
    css`
      border-color: #666;
      border-width: 2px 0 0 2px;
      background: #f6f6f6;
    `}
`;

const StatusTray = styled.div`
  display: flex;
  align-items: center;
  gap: 6px;
  height: 24px;
  margin-left: auto;
  padding: 0 4px;
  border-left: 2px solid #aaa;
  border-top: 2px solid #aaa;
`;

const StatusButton = styled.button`
  margin-left: 10px;
`;

/* ---------- taskbar ---------- */

const Taskbar = styled.nav`
  display: flex;
  flex: none;
  height: 50px;
  background: #000;
  color: #fff;
`;

const TaskButton = styled.button<{ $wide?: boolean; $open?: boolean; $active?: boolean }>`
  display: grid;
  place-items: center;
  width: ${(p) => (p.$wide ? 60 : 62)}px;
  height: 50px;
  border-top: 3px solid transparent;
  border-bottom: 3px solid transparent;
  background: ${(p) => (p.$active ? "#333" : "transparent")};
  ${(p) => p.$open && "background: linear-gradient(#7fb2e0, #7fb2e0) center bottom / 51px 3px no-repeat border-box;"}
  ${(p) => p.$active && "border-bottom-color: #7fb2e0;"}
`;

const PinnedApps = styled.div`
  display: flex;
  flex: 1;
  margin-left: 3px;
`;

const TrayButton = styled.button<{ $width?: number }>`
  display: grid;
  place-items: center;
  width: ${(p) => p.$width ?? 30}px;
  font-size: 17px;
`;

const ImeMode = styled.span`
  width: 18px;
  height: 18px;
  background: #fff;
  color: #000;
  font: 18px/18px ${UI};
`;

const Clock = styled.time`
  display: flex;
  flex-direction: column;
  justify-content: center;
  width: 102px;
  text-align: center;
  font-size: 16px;
  line-height: 23px;
`;

const ShowDesktop = styled.button`
  width: 6px;
  margin-left: 15px;
  border-left: 1px solid #666;
`;

/* ---------- drawing data ---------- */

type Point = [number, number];
const CX = 1502;
const CY = 621;
const HOLES: Point[] = [[42, 228], [81, 218], [148, 179], [176, 151], [218, 78], [229, 39]];
const PLATES: Point[][] = [
  [[147, 210], [111, 231], [79, 175], [115, 155]],
  [[210, 147], [154, 115], [175, 79], [231, 111]],
  [[119, 149], [89, 118], [117, 89], [149, 119]],
];
const QUADRANTS: Point[] = [[-1, -1], [1, -1], [-1, 1], [1, 1]];
const BLOCKS = [
  [1482, 366, 43, 64], [1481, 431, 42, 43],
  [1247, 601, 64, 42], [1312, 599, 44, 43],
  [1647, 599, 44, 43], [1693, 598, 64, 42],
  [1481, 766, 42, 44], [1479, 811, 42, 65],
];
const TABS = [
  "1301,408 1325,432 1315,442 1290,418",
  "1706,407 1716,417 1688,444 1678,434",
  "1318,798 1327,809 1299,833 1289,823",
  "1692,794 1717,820 1707,831 1682,804",
];

const Drawing = () => (
  <svg viewBox="35 127 1850 777" preserveAspectRatio="xMidYMid slice" role="img" aria-label="43.dwg">
    <g fill="none" stroke="#dcdcdc" strokeWidth="1.3">
      <path d="M1502 127V552M1502 560V905M35 621H1885" strokeWidth="1.5" />
      <path d="M1365 905L1204 743V497L1378 323H1625L1798 497V743L1638 905" />
      <circle cx={CX} cy={620} r="253" />
      <circle cx={CX} cy={620} r="159" />
      <circle cx={CX} cy={620} r="29" />
      {QUADRANTS.map(([sx, sy]) => (
        <g key={`${sx}${sy}`}>
          {HOLES.map(([x, y]) => (
            <circle key={x} cx={CX + sx * x} cy={CY + sy * y - (sy > 0 ? 1 : 0)} r="14" />
          ))}
          {PLATES.map((pts, i) => (
            <polygon key={i} points={pts.map(([x, y]) => `${CX + sx * x},${CY + sy * y - (sy > 0 ? 1 : 0)}`).join(" ")} />
          ))}
        </g>
      ))}
      {BLOCKS.map(([x, y, w, h]) => (
        <rect key={`${x}-${y}`} x={x} y={y} width={w} height={h} strokeWidth="1.5" />
      ))}
      {TABS.map((p) => (
        <polygon key={p} points={p} stroke="#b4b4b4" />
      ))}
      <path d="M1505.500 509V604M1457 555.500H1552M1502 552h7v7h-7" />
      <path d="M50 872h15v15H50zM57.500 872V804M65 879.500H131" />
      <path d="M57.500 787L50 804h15zM57.500 787v17M57.500 787l-4 17M57.500 787l4 17" strokeWidth="1" />
      <path d="M151 879.500L131 872v14zM151 879.500h-20M151 879.500l-20-4M151 879.500l-20 4" strokeWidth="1" />
    </g>
    <AxisLabel x="59" y="775">Y</AxisLabel>
    <AxisLabel x="171" y="889">X</AxisLabel>
  </svg>
);

/* ---------- static lists ---------- */

const MENUS = ["文件(F)", "编辑(E)", "视图(V)", "插入(I)", "格式(O)", "工具(T)", "绘图(D)", "标注(N)", "修改(M)", "窗口(W)", "帮助(H)", "Express"];
const DRAW = ["line", "xline", "pline", "polygon", "rect", "arc", "circle", "cloud", "spline", "ellipse", "ellipseArc", "insert", "makeBlock", "point", "hatch", "gradient", "region", "table", "text"];
const MODIFY = ["erase", "copyObj", "mirror", "offset", "array", "move", "rotate", "scale", "stretch", "trim", "extend", "breakAt", "break", "join", "chamfer", "fillet", "explode"];
const NAV = ["M2 1v10M9 1v10L4 6z", "M9 1v10L3 6z", "M3 1v10l6-5z", "M11 1v10M4 1v10l5-5z"];
const TOGGLES: [string, boolean, boolean][] = [
  ["捕捉", false, false], ["栅格", false, false], ["正交", false, false], ["极轴", false, false],
  ["对象捕捉", true, false], ["对象追踪", false, false], ["DUCS", true, true], ["DYN", false, true],
  ["线宽", false, false], ["模型", true, false],
];

const LayoutTab = ({ label, on }: { label: string; on?: boolean }) => (
  <Tab $on={on}>
    <svg viewBox="0 0 50 18" preserveAspectRatio="none" aria-hidden="true">
      <path d="M0 0l6 17h37l6-17" fill={on ? "#000" : "#eee"} stroke="#111" strokeWidth="1.5" />
    </svg>
    <span>{label}</span>
  </Tab>
);

const Apps = () => (
  <PinnedApps>
    <TaskButton aria-label="shield">
      <svg width="26" height="30" viewBox="0 0 26 30">
        <path d="M13 1l11 3v12c0 7-6 11-11 13C8 27 2 23 2 16V4z" fill="#e9f5fd" stroke="#1d86cf" strokeWidth="3" />
        <path d="M13 3l9 3v10c0 6-5 9-9 11z" fill="#4cb0ea" opacity=".35" />
        <path d="M7 20l6-13 6 13h-4l-2-6-2 6z" fill="#1a7bc6" />
      </svg>
    </TaskButton>
    <TaskButton $open aria-label="explorer">
      <svg width="28" height="24" viewBox="0 0 28 24">
        <path d="M1 1h10l2 3h14v18H1z" fill="#e9b94d" />
        <path d="M1 6h26v17H1z" fill="#fbdd85" />
        <path d="M5 23V13h18v10h-5v-5h-8v5z" fill="#35aee0" />
      </svg>
    </TaskButton>
    <TaskButton aria-label="kugou">
      <svg width="30" height="30" viewBox="0 0 30 30">
        <rect width="30" height="30" rx="5" fill="#1a78ea" />
        <circle cx="15" cy="15" r="11.5" fill="none" stroke="#fff" strokeWidth="1.5" />
        <path d="M12 9v12M20 9l-7 6 7 6" fill="none" stroke="#fff" strokeWidth="3" />
      </svg>
    </TaskButton>
    <TaskButton aria-label="music">
      <svg width="30" height="30" viewBox="0 0 30 30">
        <rect width="30" height="30" rx="5" fill="#d8001b" />
        <path d="M20 6c-3-2-6 0-5 3l2 8c0 4-6 4-6 0 0-3 3-5 6-5 7 0 9 8 4 12-6 4-14 1-15-6 0-4 2-7 6-9" fill="none" stroke="#fff" strokeWidth="2.3" strokeLinecap="round" />
      </svg>
    </TaskButton>
    <TaskButton aria-label="browser">
      <svg width="28" height="30" viewBox="0 0 28 30">
        <circle cx="14" cy="15" r="13" fill="#5cba2f" />
        <path d="M7 16h14c0-9-14-9-14 0 0 8 11 9 14 3" fill="none" stroke="#fff" strokeWidth="3.5" />
        <path d="M2 27c2-9 10-22 24-26" fill="none" stroke="#2c8a17" strokeWidth="1.5" />
      </svg>
    </TaskButton>
    <TaskButton $open aria-label="recorder">
      <svg width="28" height="28" viewBox="0 0 28 28">
        <circle cx="14" cy="14" r="12.5" fill="#000" stroke="#fff" strokeWidth="2" />
        <circle cx="14" cy="14" r="8" fill="#e8211f" />
      </svg>
    </TaskButton>
    <TaskButton $active aria-label="AutoCAD">
      <svg width="30" height="30" viewBox="-1 -1 22 22">
        <path d="M-1-1h22v22H-1z" fill="#fff" />
        {ICONS.autocad}
      </svg>
    </TaskButton>
  </PinnedApps>
);

export default function App() {
  return (
    <Page>
      <GlobalStyle />
      <TitleBar>
        <Icon name="autocad" size={19} />
        <Title>AutoCAD 2007 - [E:\Users\HP\Desktop\43.dwg]</Title>
        <Watermark>
          <WatermarkSmall $slant>www.</WatermarkSmall>BANDICAM<WatermarkSmall>.com</WatermarkSmall>
        </Watermark>
        {["M0 6h12", "M1 4h8v8H1zM4 4V1h8v8H9", "M0 0l12 12M12 0L0 12"].map((d) => (
          <WindowButton key={d} aria-label="window control">
            <svg width="13" height="13" viewBox="0 0 13 13">
              <path d={d} fill="none" stroke="#111" strokeWidth="1.2" />
            </svg>
          </WindowButton>
        ))}
      </TitleBar>
      <MenuBar>
        <Icon name="dwg" />
        <Menus>
          {MENUS.map((m) => (
            <MenuItem key={m}>{m}</MenuItem>
          ))}
        </Menus>
        {["M2 9h7", "M1 5h7v5H1zM4 5V1h7v6H8", "M2 1l8 9M10 1L2 10"].map((d) => (
          <ChildButton key={d} aria-label="drawing window control">
            <svg width="12" height="12" viewBox="0 0 12 12">
              <path d={d} fill="none" stroke="#6c7c8e" strokeWidth="2" />
            </svg>
          </ChildButton>
        ))}
      </MenuBar>

      <ToolRow $tight>
        <ToolPanel>
          <Grip />
          <Tools names={["new", "open", "save"]} />
          <Separator />
          <Tools names={["print", "preview", "publish", "web"]} />
          <Separator />
          <Tools names={["cut", "copy", "paste", "brush", "block"]} />
          <Separator />
          <Tools names={["undo"]} />
          <DropButton aria-label="undo list"><Caret color="#1f2f7c" /></DropButton>
          <Tools names={["redo"]} />
          <DropButton aria-label="redo list"><Caret color="#bbb" /></DropButton>
          <Separator />
          <Tools names={["pan", "zoom", "zoomWindow", "zoomPrev"]} />
          <Separator />
          <Tools names={["props", "design", "palettes", "sheetset", "markup", "calc"]} />
          <Separator />
          <Tools names={["help"]} />
        </ToolPanel>
        <ToolPanel>
          <Grip />
          <Tools names={["textStyle"]} />
          <ComboBox label="文字样式" value="Standard" width={126} soft />
          <Separator />
          <Tools names={["dimStyle"]} />
          <ComboBox label="标注样式" value="ISO-25" width={126} soft />
          <Separator />
          <Tools names={["tableStyle"]} />
          <ComboBox label="表格样式" value="Standard" width={126} soft />
        </ToolPanel>
      </ToolRow>
      <ToolRow>
        <ToolPanel>
          <Grip />
          <ComboBox label="工作空间" value="AutoCAD 经典" width={217} indent={4} />
          <Tools names={["gear", "home"]} />
        </ToolPanel>
        <ToolPanel>
          <Grip />
          <Tools names={["layers"]} />
          <ComboBox label="图层" value="0" width={375} indent={3}>
            {["bulb", "sun", "freeze", "unlock"].map((n) => (
              <Icon key={n} name={n} size={18} />
            ))}
            <Swatch />
          </ComboBox>
          <Tools names={["layerCurrent", "layerPrev"]} />
        </ToolPanel>
        <ToolPanel>
          <Grip />
          <ComboBox label="颜色" value="ByLayer" width={187} indent={2}>
            <Swatch />
          </ComboBox>
          <Separator />
          <ComboBox label="线型" value="ByLayer" width={200}>
            <Rule $width={75} />
          </ComboBox>
          <Separator />
          <ComboBox label="线宽" value="ByLayer" width={157}>
            <Rule $width={44} />
          </ComboBox>
          <Separator />
          <ComboBox label="打印样式" value="随颜色" width={152} indent={8} soft off han />
        </ToolPanel>
      </ToolRow>

      <Work>
        <Side>
          <SidePanel $tail={11}>
            <Grip $flat />
            <SideTools><Tools names={DRAW} /></SideTools>
          </SidePanel>
        </Side>
        <Viewport>
          <Canvas><Drawing /></Canvas>
          <TabBar>
            {NAV.map((d) => (
              <TabNav key={d} aria-label="scroll tabs">
                <svg width="12" height="12" viewBox="0 0 12 12">
                  <path d={d} fill="#111" stroke="#111" />
                </svg>
              </TabNav>
            ))}
            <Tabs>
              <LayoutTab label="模型" on />
              <LayoutTab label="布局1" />
              <LayoutTab label="布局2" />
            </Tabs>
          </TabBar>
        </Viewport>
        <Side $right>
          <SidePanel>
            <Grip $flat />
            <SideTools><Tools names={MODIFY} /></SideTools>
          </SidePanel>
          <SidePanel>
            <Grip $flat />
            <SideTools><Tools names={["front", "back", "above", "under"]} /></SideTools>
          </SidePanel>
        </Side>
      </Work>

      <Command>
        <CommandGrip />
        <CommandBox>
          <CommandRow>
            <Message>
              <Han>指定旋转角度，或</Han> [<Han>复制</Han>(C)/<Han>参照</Han>(R)] &lt;45&gt;:{"  "}-45
            </Message>
            <VScroll>
              <button aria-label="up"><Chevron d="M1 8l5-5 5 5" /></button>
              <button aria-label="down"><Chevron /></button>
            </VScroll>
          </CommandRow>
          <CommandRow $entry>
            <Prompt htmlFor="command"><Han>命令</Han>:</Prompt>
            <Entry id="command" />
            <HScroll>
              <button aria-label="left"><Chevron d="M8 1L3 6l5 5" /></button>
              <Thumb />
              <button aria-label="right"><Chevron d="M4 1l5 5-5 5" /></button>
            </HScroll>
          </CommandRow>
        </CommandBox>
      </Command>

      <Status>
        <Coordinates>1323.8011, 17.3027 , 0.0000</Coordinates>
        {TOGGLES.map(([label, down, latin]) => (
          <Toggle key={label} $down={down} $latin={latin}>{label}</Toggle>
        ))}
        <StatusTray>
          <Icon name="dish" />
          <Icon name="tray" />
          <Icon name="xref" />
        </StatusTray>
        <StatusButton aria-label="status menu"><Caret color="#000" /></StatusButton>
        <StatusButton aria-label="clean screen"><Icon name="clean" /></StatusButton>
      </Status>

      <Taskbar>
        <TaskButton $wide aria-label="start">
          <svg width="20" height="20" viewBox="0 0 20 20">
            <path d="M0 3l8-1v7H0zM9 2l11-2v9H9zM0 10h8v8l-8-1zM9 10h11v10L9 18z" fill="#fff" />
          </svg>
        </TaskButton>
        <TaskButton $wide aria-label="search">
          <svg width="20" height="20" viewBox="0 0 20 20">
            <circle cx="10" cy="10" r="8.5" fill="none" stroke="#fff" strokeWidth="2.5" />
          </svg>
        </TaskButton>
        <TaskButton $wide aria-label="task view">
          <svg width="24" height="20" viewBox="0 0 24 20">
            <path d="M5 2h14v16H5zM3 4H1v12h2M21 4h2v12h-2" fill="none" stroke="#fff" strokeWidth="1.3" />
          </svg>
        </TaskButton>
        <Apps />
        <TrayButton aria-label="hidden icons">
          <svg width="18" height="12" viewBox="0 0 18 12"><path d="M1 10l8-8 8 8" fill="none" stroke="#fff" strokeWidth="1.4" /></svg>
        </TrayButton>
        <TrayButton aria-label="QQ">
          <svg width="20" height="20" viewBox="0 0 20 20">
            <path d="M5 4a3 3 0 0 1 6 0l2 5 2 6-3 3H3l-3-3 3-6z" fill="#3a2c28" />
            <ellipse cx="7.5" cy="14" rx="4" ry="4.5" fill="#fff" />
            <circle cx="6.5" cy="4" r="1.5" fill="#fff" />
            <circle cx="9.5" cy="4" r="1.500" fill="#fff" />
            <path d="M3 8h10v2.500H3z" fill="#d8331f" />
            <path d="M4 6h7l-3.500 2z" fill="#f0b020" />
            <path d="M1 18h6v2H1zM8 18h6v2H8z" fill="#e8862a" />
            <path d="M1 10l3-1-2 7z" fill="#d8331f" />
            <rect x="9" y="9" width="11" height="8" rx="1" fill="#f4a92c" />
            <path d="M11 13h7" stroke="#fff" strokeDasharray="1 1.500" strokeWidth="1.5" />
          </svg>
        </TrayButton>
        <TrayButton aria-label="360">
          <svg width="20" height="20" viewBox="0 0 20 20">
            <circle cx="10" cy="10" r="10" fill="#f5d81a" />
            <path d="M1 6a10 10 0 0 1 18 8C18 5 9 1 1 6zM1 14c3 4 9 6 14 4a10 10 0 0 1-14-4z" fill="#35a53b" />
            <path d="M10 5v9M5.500 9.500h9" stroke="#1f8a2a" strokeWidth="2.2" />
          </svg>
        </TrayButton>
        <TrayButton aria-label="battery">
          <svg width="20" height="16" viewBox="0 0 20 16">
            <path d="M5 4h13v10H5z" fill="#fff" stroke="#fff" />
            <path d="M19 7v4" stroke="#fff" strokeWidth="2" />
            <path d="M0 4h6v3l-2 2H2L0 7zM1 1v3M5 1v3M3 9v3h2" fill="#000" stroke="#fff" />
          </svg>
        </TrayButton>
        <TrayButton aria-label="volume">
          <svg width="20" height="16" viewBox="0 0 20 16" fill="none" stroke="#fff">
            <path d="M1 5h3l4-4v14l-4-4H1z" strokeWidth="1.3" />
            <path d="M11 5c1 2 1 4 0 6" />
            <path d="M14 3c2 3 2 7 0 10M17 1c3 4 3 10 0 14" stroke="#777" />
          </svg>
        </TrayButton>
        <TrayButton aria-label="network">
          <svg width="20" height="16" viewBox="0 0 20 16" fill="none" stroke="#fff" strokeWidth="1.2">
            <path d="M7 2h12v9H5V8M12 11v4M8 15h9M1 1h5v3L4 6H3L1 4zM3.500 6v9H6" />
          </svg>
        </TrayButton>
        <TrayButton>英</TrayButton>
        <TrayButton $width={40}><ImeMode>M</ImeMode></TrayButton>
        <Clock>
          <span>0:25</span>
          <span>2020/4/17</span>
        </Clock>
        <TrayButton $width={40} aria-label="notifications">
          <svg width="21" height="20" viewBox="0 0 21 20" fill="none" stroke="#fff" strokeWidth="1.3">
            <path d="M13 16h-2l-4 3v-3H1V1h19v10" />
            <path d="M17 12c2 3-1 6-4 5 3 4 8 0 4-5z" />
          </svg>
        </TrayButton>
        <ShowDesktop aria-label="show desktop" />
      </Taskbar>
    </Page>
  );
}
